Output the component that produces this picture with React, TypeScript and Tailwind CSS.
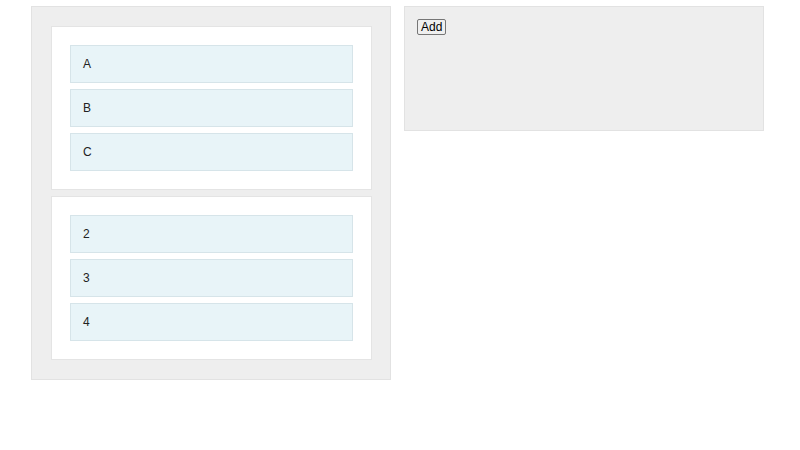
const groups = [
  ['A', 'B', 'C'],
  ['2', '3', '4'],
]

function Item({ label }: { label: string }) {
  return (
    <div className="flex h-[38px] items-center border border-[#d6e4e9] bg-[#e8f4f8] px-[12px] text-[12px] text-[#222]">
      {label}
    </div>
  )
}

export default function App() {
  return (
    <div className="flex items-start gap-[13px] pl-[31px] pt-[6px] font-['Liberation_Sans',Arial,sans-serif]">
      <div className="flex w-[360px] flex-col gap-[6px] border border-[#e2e2e2] bg-[#eeeeee] py-[19px] pl-[19px] pr-[18px]">
        {groups.map((g, i) => (
          <div key={i} className="flex flex-col gap-[6px] border border-[#e4e4e4] bg-white p-[18px]">
            {g.map((l) => (
              <Item key={l} label={l} />
            ))}
          </div>
        ))}
      </div>
      <div className="h-[125px] w-[360px] border border-[#e2e2e2] bg-[#eeeeee] px-[12px] pt-[12px]">
        <button className="block h-[16px] rounded-[2px] border border-[#767676] bg-[#efefef] px-[3px] text-[12px] leading-[14px] text-black">
          Add
        </button>
      </div>
    </div>
  )
}
